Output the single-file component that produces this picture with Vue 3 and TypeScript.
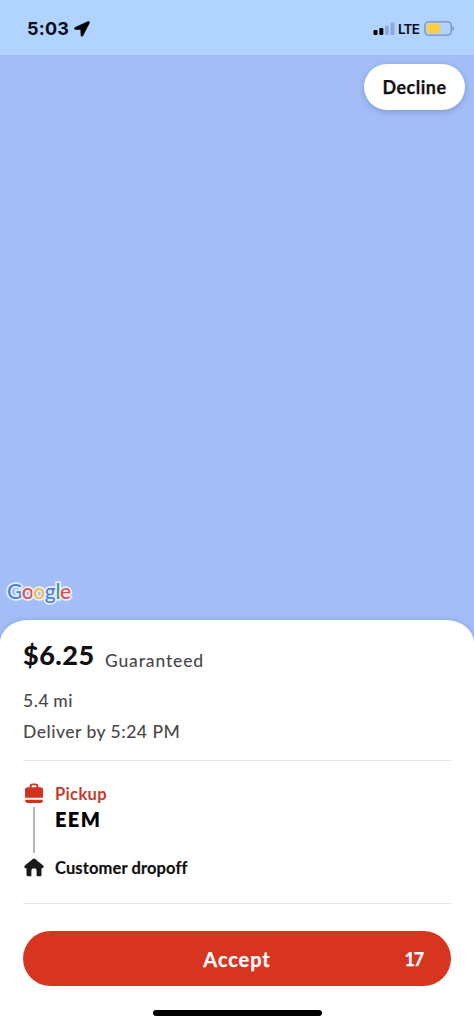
<script setup lang="ts">
interface LogoLetter {
  char: string
  tone: string
}

const logo: LogoLetter[] = [
  { char: 'G', tone: 'blue' },
  { char: 'o', tone: 'red' },
  { char: 'o', tone: 'yellow' },
  { char: 'g', tone: 'blue' },
  { char: 'l', tone: 'green' },
  { char: 'e', tone: 'red' },
]

const offer = {
  pay: '$6.25',
  payLabel: 'Guaranteed',
  distance: '5.4 mi',
  deadline: 'Deliver by 5:24 PM',
  store: 'EEM',
  secondsLeft: 17,
}
</script>

<template>
  <main class="screen">
    <header class="status">
      <span class="time">5:03</span>
      <svg class="location" width="16" height="16" viewBox="0 0 16 16">
        <path d="M14.1.6 1 6.5c-1.1.5-.9 1.900.3 1.900l5.500.1.2 5.700c0 1.300 1.400 1.500 1.900.4L15.400 1.900C15.800.9 15 .2 14.100.6Z" />
      </svg>
      <svg class="signal" width="22" height="14" viewBox="0 0 22 14">
        <rect x="0.5" y="8" width="4" height="5" rx="1.2" />
        <rect x="6.3" y="6" width="4" height="7" rx="1.2" />
        <rect class="weak" x="12" y="3.4" width="3.8" height="9.6" rx="1" />
        <rect class="weak" x="17.5" y="0.5" width="4" height="12.5" rx="1" />
      </svg>
      <span class="network">LTE</span>
      <svg class="battery" width="31" height="15" viewBox="0 0 31 15">
        <rect class="shell" x="0.9" y="0.9" width="26.4" height="13.2" rx="3.8" />
        <rect class="charge" x="2.8" y="2.8" width="13.4" height="9.4" rx="2" />
        <path class="tip" d="M28.7 5.3c1.6.7 1.6 3.7 0 4.4Z" />
      </svg>
    </header>

    <section class="map">
      <button class="decline" type="button">Decline</button>
      <div class="google">
        <span v-for="(letter, i) in logo" :key="i" :class="letter.tone">{{ letter.char }}</span>
      </div>
    </section>

    <section class="sheet">
      <div class="pay">
        <strong class="amount">{{ offer.pay }}</strong>
        <span class="guaranteed">{{ offer.payLabel }}</span>
      </div>
      <p class="detail distance">{{ offer.distance }}</p>
      <p class="detail deadline">{{ offer.deadline }}</p>

      <div class="route">
        <div class="track">
          <svg class="bag" width="20" height="21" viewBox="0 0 20 21">
            <path d="M5.6 4.2V3.5C5.6 1.6 6.7.4 8.7.4h2.6c2 0 3.1 1.2 3.1 3.1v.7h2.2c1.5 0 2.4.9 2.4 2.4v8.1H1V6.6c0-1.5.9-2.4 2.4-2.4Zm2 0h4.8V3.5c0-.8-.4-1.2-1.2-1.2H8.8c-.8 0-1.2.4-1.2 1.2Z" />
            <path d="M1 16.7h18c0 2-1 3.3-2.8 3.3H3.8C2 20 1 18.7 1 16.7Z" />
          </svg>
          <span class="line"></span>
          <svg class="home" width="20" height="19" viewBox="0 0 20 19">
            <path d="M8.5 1.2.9 7.5C-.2 8.5.2 10.2 1.7 10.2h.8v6.2c0 1.3.6 1.9 1.7 1.9h3.2v-5.4c0-1.7.9-2.6 2.6-2.6s2.6.9 2.6 2.6v5.4h3.2c1.1 0 1.7-.6 1.7-1.9v-6.2h.8c1.5 0 1.9-1.7.8-2.7l-7.6-6.3c-1-.8-2-.8-3 0Z" />
          </svg>
        </div>
        <div class="stops">
          <span class="pickup">Pickup</span>
          <span class="store">{{ offer.store }}</span>
          <span class="dropoff">Customer dropoff</span>
        </div>
      </div>

      <button class="accept" type="button">
        <span class="accept-label">Accept</span>
        <span class="countdown">{{ offer.secondsLeft }}</span>
      </button>
      <div class="home-indicator"></div>
    </section>
  </main>
</template>

<style>
body {
  margin: 0;
  background: #fff;
}
</style>

<style scoped>
.screen {
  display: flex;
  flex-direction: column;
  width: 474px;
  height: 1025px;
  overflow: hidden;
  background: #a3bef7;
  font-family: Lato, "Open Sans", sans-serif;
  color: #111;
}

button {
  border: 0;
  font-family: inherit;
}

.status {
  display: flex;
  flex: none;
  align-items: center;
  box-sizing: border-box;
  height: 55px;
  padding: 2px 19px 0 27px;
  background: #b0d3ff;
  font-family: Inter, sans-serif;
  color: #080c18;
}

.time {
  width: 43px;
  font-size: 18px;
  font-weight: 700;
  letter-spacing: 0.2px;
  white-space: nowrap;
}

.location {
  margin-left: 4px;
  stroke: #080c18;
  stroke-width: 0.7;
}

.signal {
  margin-left: auto;
}

.signal .weak {
  fill: #8fa9dc;
}

.network {
  width: 21px;
  margin: 0 5px 0 3px;
  font-size: 13.5px;
  font-weight: 600;
  letter-spacing: -0.8px;
}

.shell {
  fill: none;
  stroke: #7892bf;
  stroke-width: 1.4;
}

.charge {
  fill: #f8ce46;
}

.tip {
  fill: #66799c;
}

.map {
  display: flex;
  flex: none;
  flex-direction: column;
  justify-content: space-between;
  box-sizing: border-box;
  height: 565px;
  padding: 9px 9px 14px 7px;
}

.decline {
  align-self: flex-end;
  width: 101px;
  height: 46px;
  padding: 0;
  border-radius: 23px;
  background: #fff;
  box-shadow: 0 2px 6px rgba(40, 60, 110, 0.28);
  color: #111;
  font-size: 18px;
  font-weight: 700;
  letter-spacing: 0.5px;
  -webkit-text-stroke: 0.25px #111;
}

.google {
  font-size: 21px;
  font-weight: 500;
  line-height: 30px;
  letter-spacing: -0.4px;
  -webkit-text-stroke: 3.5px #e6edff;
  paint-order: stroke fill;
}

.blue { color: #4c7fdc; }
.red { color: #dc514c; }
.yellow { color: #ecbd45; }
.green { color: #439d63; }

.sheet {
  flex: 1;
  padding: 0 23px;
  border-radius: 28px 28px 0 0 / 23px 23px 0 0;
  background: #fff;
  box-shadow: 0 -1px 5px rgba(60, 80, 140, 0.16);
}

.pay {
  display: flex;
  height: 66px;
  line-height: 40px;
  padding-top: 15px;
  box-sizing: border-box;
}

.amount {
  width: 82px;
  font-size: 27px;
  font-weight: 900;
  letter-spacing: 0.5px;
}

.guaranteed {
  padding-top: 6px;
  font-size: 17.5px;
  font-weight: 500;
  letter-spacing: 0.85px;
  color: #494949;
}

.detail {
  height: 30px;
  margin: 0;
  font-size: 17.5px;
  font-weight: 500;
  line-height: 30px;
  color: #494949;
}

.distance {
  letter-spacing: 0.6px;
  word-spacing: -1px;
}

.deadline {
  line-height: 32px;
  letter-spacing: 0.5px;
}

.route {
  display: flex;
  box-sizing: border-box;
  height: 144px;
  margin-top: 14px;
  padding-top: 22px;
  border-top: 1px solid #e5e5e5;
  border-bottom: 1px solid #e5e5e5;
}

.track {
  display: flex;
  flex-direction: column;
  align-items: center;
  width: 22px;
}

.bag {
  flex: none;
  fill: #d33120;
}

.line {
  width: 2px;
  height: 46px;
  margin: 3px 0 5px;
  background: #b5b5b5;
}

.home {
  flex: none;
  fill: #191919;
}

.stops {
  display: flex;
  flex-direction: column;
  margin-left: 10px;
}

.pickup {
  line-height: 23px;
  font-size: 16.5px;
  font-weight: 700;
  letter-spacing: 0.35px;
  color: #c9392b;
}

.store {
  line-height: 26px;
  font-size: 20px;
  font-weight: 800;
  letter-spacing: 1.4px;
  color: #000;
}

.dropoff {
  margin-top: 25px;
  line-height: 22px;
  font-size: 16.5px;
  font-weight: 700;
  letter-spacing: 0.12px;
  -webkit-text-stroke: 0.2px #111;
}

.accept {
  display: grid;
  grid-template-columns: 1fr auto 1fr;
  align-items: center;
  width: 428px;
  height: 55px;
  margin-top: 27px;
  padding: 1px 28px 0;
  border-radius: 28px;
  background: #d83520;
  color: #fff;
  font-size: 20px;
  font-weight: 700;
  -webkit-text-stroke: 0.25px #fff;
}

.accept-label {
  grid-column: 2;
  letter-spacing: 0.9px;
}

.countdown {
  justify-self: end;
  font-size: 18px;
  letter-spacing: -1.2px;
}

.home-indicator {
  width: 169px;
  height: 6px;
  margin: 24px auto 0;
  border-radius: 3px;
  background: #000;
}
</style>
